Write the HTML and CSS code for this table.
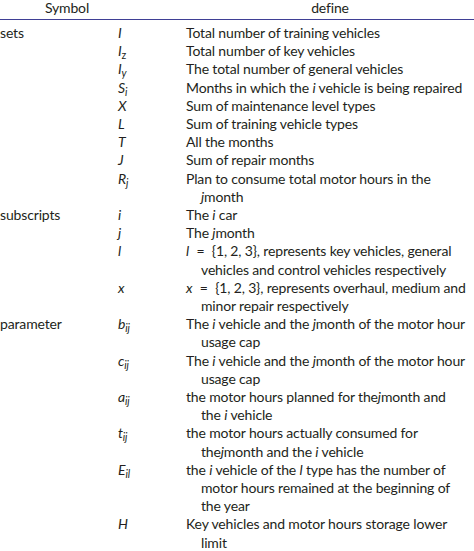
FILE: index.html
```html
<!DOCTYPE html>
<html>
<head>
<meta charset="utf-8">
<link rel="stylesheet" href="styles.css">
</head>
<body>
<div class="table">
  <div class="head">
    <div class="h-sym">Symbol</div>
    <div class="h-def">define</div>
  </div>
  <div class="rows">
    <div class="cat">sets</div><div class="sym"><i>I</i></div><div class="def">Total number of training vehicles</div>
    <div class="cat"></div><div class="sym"><i>I</i><sub>z</sub></div><div class="def">Total number of key vehicles</div>
    <div class="cat"></div><div class="sym"><i>I<sub>y</sub></i></div><div class="def">The total number of general vehicles</div>
    <div class="cat"></div><div class="sym"><i>S<sub>i</sub></i></div><div class="def">Months in which the <i>i</i> vehicle is being repaired</div>
    <div class="cat"></div><div class="sym"><i>X</i></div><div class="def">Sum of maintenance level types</div>
    <div class="cat"></div><div class="sym"><i>L</i></div><div class="def">Sum of training vehicle types</div>
    <div class="cat"></div><div class="sym"><i>T</i></div><div class="def">All the months</div>
    <div class="cat"></div><div class="sym"><i>J</i></div><div class="def">Sum of repair months</div>
    <div class="cat"></div><div class="sym"><i>R<sub>j</sub></i></div><div class="def">Plan to consume total motor hours in the<br><i>j</i>month</div>
    <div class="cat">subscripts</div><div class="sym"><i>i</i></div><div class="def">The <i>i</i> car</div>
    <div class="cat"></div><div class="sym"><i>j</i></div><div class="def">The <i>j</i>month</div>
    <div class="cat"></div><div class="sym"><i>l</i></div><div class="def"><i>l</i> <span class="eq">=</span> {1, 2, 3}, represents key vehicles, general<br>vehicles and control vehicles respectively</div>
    <div class="cat"></div><div class="sym"><i>x</i></div><div class="def"><i>x</i> <span class="eq">=</span> {1, 2, 3}, represents overhaul, medium and<br>minor repair respectively</div>
    <div class="cat">parameter</div><div class="sym"><i>b<sub>ij</sub></i></div><div class="def">The <i>i</i> vehicle and the <i>j</i>month of the motor hour<br>usage cap</div>
    <div class="cat"></div><div class="sym"><i>c<sub>ij</sub></i></div><div class="def">The <i>i</i> vehicle and the <i>j</i>month of the motor hour<br>usage cap</div>
    <div class="cat"></div><div class="sym"><i>a<sub>ij</sub></i></div><div class="def">the motor hours planned for the<i>j</i>month and<br>the <i>i</i> vehicle</div>
    <div class="cat"></div><div class="sym"><i>t<sub>ij</sub></i></div><div class="def">the motor hours actually consumed for<br>the<i>j</i>month and the <i>i</i> vehicle</div>
    <div class="cat"></div><div class="sym"><i>E<sub>il</sub></i></div><div class="def">the <i>i</i> vehicle of the <i>l</i> type has the number of<br>motor hours remained at the beginning of<br>the year</div>
    <div class="cat"></div><div class="sym"><i>H</i></div><div class="def">Key vehicles and motor hours storage lower<br>limit</div>
  </div>
</div>
</body>
</html>
```

FILE: styles.css
```css
html, body {
  margin: 0;
  padding: 0;
  background: #ffffff;
  overflow: hidden;
}
body {
  width: 474px;
  height: 551px;
  font-family: "Lato", "Open Sans", sans-serif;
  font-size: 14px;
  letter-spacing: -0.15px;
  color: #231f20;
}
.table {
  width: 474px;
}
.head {
  display: grid;
  grid-template-columns: 134px 1fr;
  height: 19px;
  line-height: 15px;
  border-bottom: 1px solid #3f3f95;
}
.h-sym {
  text-align: center;
}
.h-def {
  text-align: center;
  padding-left: 52px;
}
.rows {
  display: grid;
  grid-template-columns: 118px 68px 1fr;
  line-height: 18.2px;
  padding-top: 4px;
}
.cat {
  padding-left: 0;
}
.sym {
  white-space: nowrap;
}
.def {
  white-space: nowrap;
  padding-left: 15px;
  text-indent: -15px;
}
.eq {
  margin: 0 4px;
}
sub {
  font-size: 0.75em;
  vertical-align: -0.3em;
  line-height: 0;
}
i sub {
  font-style: italic;
}
.sym > sub {
  font-style: normal;
}
```
